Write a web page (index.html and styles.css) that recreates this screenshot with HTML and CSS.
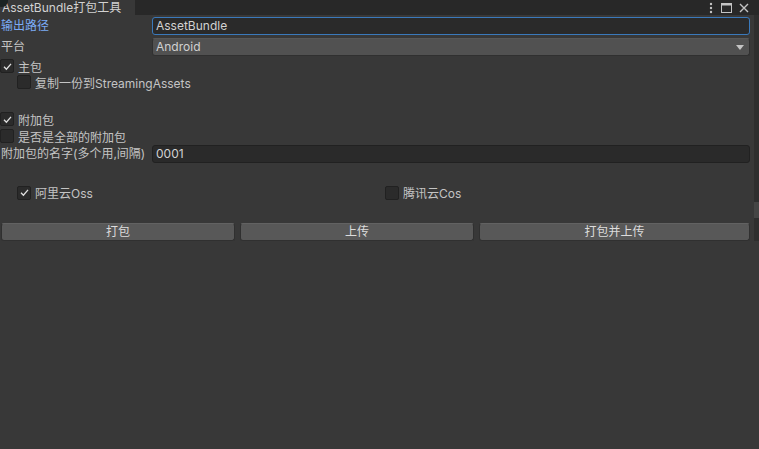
FILE: index.html
```html
<!DOCTYPE html>
<html>
<head>
<meta charset="utf-8">
<link rel="stylesheet" href="styles.css">
</head>
<body>
<div class="window">
  <div class="tabbar">
    <div class="tab">AssetBundle打包工具<span class="dot"></span></div>
    <div class="tabicons">
      <svg class="ico-more" width="4" height="12" viewBox="0 0 4 12"><circle cx="2" cy="2" r="1.2" fill="#c4c4c4"/><circle cx="2" cy="6" r="1.2" fill="#c4c4c4"/><circle cx="2" cy="10" r="1.2" fill="#c4c4c4"/></svg>
      <svg class="ico-max" width="11" height="10" viewBox="0 0 11 10"><rect x="0.5" y="0.5" width="10" height="9" fill="none" stroke="#c4c4c4"/><rect x="0.5" y="0.5" width="10" height="2" fill="#c4c4c4"/></svg>
      <svg class="ico-close" width="10" height="10" viewBox="0 0 10 10"><path d="M1 1 L9 9 M9 1 L1 9" stroke="#c4c4c4" stroke-width="1.4"/></svg>
    </div>
  </div>
  <div class="body">
    <div class="content">
      <div class="row r1">
        <div class="label focus">输出路径</div>
        <div class="field focused">AssetBundle</div>
      </div>
      <div class="row r2">
        <div class="label">平台</div>
        <div class="dropdown">Android<span class="arrow"></span></div>
      </div>
      <div class="check r3">
        <span class="box on"><svg width="11" height="11" viewBox="0 0 11 11"><path d="M2 5.8 L4.4 8.2 L9 2.8" fill="none" stroke="#e0e0e0" stroke-width="1.3"/></svg></span>
        <span>主包</span>
      </div>
      <div class="check indent r4">
        <span class="box"></span>
        <span>复制一份到StreamingAssets</span>
      </div>
      <div class="check r5">
        <span class="box on"><svg width="11" height="11" viewBox="0 0 11 11"><path d="M2 5.8 L4.4 8.2 L9 2.8" fill="none" stroke="#e0e0e0" stroke-width="1.3"/></svg></span>
        <span>附加包</span>
      </div>
      <div class="check r6">
        <span class="box"></span>
        <span>是否是全部的附加包</span>
      </div>
      <div class="row r7">
        <div class="label">附加包的名字(多个用,间隔)</div>
        <div class="field">0001</div>
      </div>
      <div class="cloud r8">
        <div class="check indent">
          <span class="box on"><svg width="11" height="11" viewBox="0 0 11 11"><path d="M2 5.8 L4.4 8.2 L9 2.8" fill="none" stroke="#e0e0e0" stroke-width="1.3"/></svg></span>
          <span>阿里云Oss</span>
        </div>
        <div class="check">
          <span class="box"></span>
          <span>腾讯云Cos</span>
        </div>
      </div>
      <div class="buttons r9">
        <div class="btn b1">打包</div>
        <div class="btn b2">上传</div>
        <div class="btn b3">打包并上传</div>
      </div>
    </div>
    <div class="scroll"><div class="thumb"></div></div>
  </div>
</div>
</body>
</html>
```
FILE: styles.css
```css
html, body {
  margin: 0;
  padding: 0;
  background: #383838;
}
body {
  width: 759px;
  height: 449px;
  overflow: hidden;
  font-family: Inter, "Noto Sans CJK SC", sans-serif;
  font-size: 12px;
  color: #c4c4c4;
}
.window {
  width: 759px;
  height: 449px;
  display: flex;
  flex-direction: column;
}
.tabbar {
  height: 15px;
  background: #282828;
  display: flex;
  justify-content: space-between;
  flex-shrink: 0;
}
.tab {
  position: relative;
  width: 133px;
  padding-left: 2px;
  background: #383838;
  line-height: 15px;
  height: 15px;
  color: #d2d2d2;
  overflow: hidden;
  white-space: nowrap;
}
.dot {
  position: absolute;
  left: -4px;
  top: -5px;
  width: 12px;
  height: 12px;
  border-radius: 50%;
  background: #1b2323;
}
.tabicons {
  display: flex;
  align-items: center;
  gap: 7px;
  padding-right: 10px;
  padding-top: 1px;
}
.ico-more { margin-right: 1px; }
.body {
  flex: 1;
  display: flex;
}
.content {
  width: 750px;
  padding-top: 2px;
  display: flex;
  flex-direction: column;
}
.row {
  display: flex;
  align-items: center;
}
.label {
  width: 151px;
  padding-left: 1px;
  white-space: nowrap;
  line-height: 16px;
}
.label.focus { color: #7babf5; }
.field {
  flex: 1;
  height: 16px;
  line-height: 16px;
  background: #2a2a2a;
  border: 1px solid #212121;
  border-radius: 3px;
  padding-left: 3px;
  color: #d2d2d2;
}
.field.focused {
  border-color: #3a79bb;
}
.r1 { height: 18px; }
.dropdown {
  position: relative;
  flex: 1;
  height: 16px;
  line-height: 16px;
  background: #515151;
  border: 1px solid #303030;
  border-top-color: #585858;
  border-radius: 3px;
  padding-left: 3px;
  color: #d2d2d2;
}
.arrow {
  position: absolute;
  right: 5px;
  top: 6px;
  width: 0;
  height: 0;
  border-left: 4px solid transparent;
  border-right: 4px solid transparent;
  border-top: 5px solid #c4c4c4;
}
.r2 { margin-top: 3px; height: 17px; }
.check {
  display: flex;
  align-items: center;
  gap: 4px;
  height: 14px;
  white-space: nowrap;
}
.check.indent { padding-left: 17px; }
.box {
  width: 12px;
  height: 12px;
  box-sizing: content-box;
  background: #2b2b2b;
  border: 1px solid #212121;
  border-radius: 2px;
  display: flex;
  align-items: center;
  justify-content: center;
  flex-shrink: 0;
}
.r3 { margin-top: 4px; }
.r4 { margin-top: 2px; }
.r5 { margin-top: 23px; }
.r6 { margin-top: 3px; }
.r7 { margin-top: 2px; height: 18px; }
.cloud {
  display: flex;
  align-items: center;
  height: 15px;
  margin-top: 22px;
}
.cloud .check:first-child { width: 368px; }
.buttons {
  display: flex;
  gap: 5px;
  margin-top: 23px;
  padding-left: 1px;
}
.btn {
  height: 16px;
  line-height: 16px;
  text-align: center;
  background: #585858;
  border: 1px solid #303030;
  border-top-color: #626262;
  border-radius: 3px;
  color: #dcdcdc;
}
.b1, .b2 { width: 232px; }
.b3 { flex: 1; }
.scroll {
  margin-left: 4px;
  width: 5px;
  height: 226px;
  background: #2e2e2e;
  position: relative;
}
.thumb {
  position: absolute;
  left: 0;
  top: 187px;
  width: 5px;
  height: 16px;
  background: #454545;
}
```
